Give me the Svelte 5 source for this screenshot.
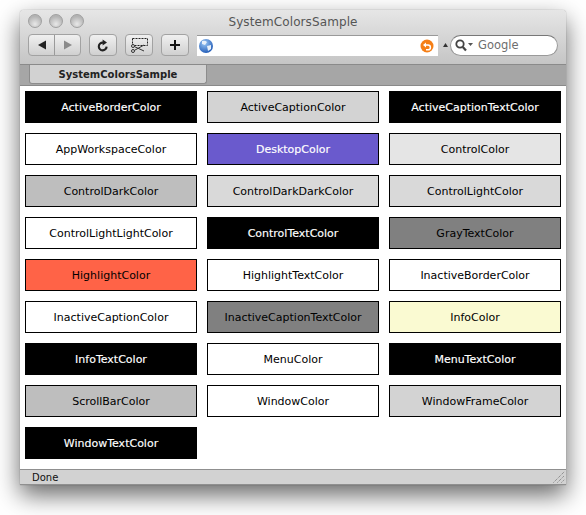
<script>
  const colors = [
    ['ActiveBorderColor', '#000', '#fff'],
    ['ActiveCaptionColor', '#d3d3d3', '#000'],
    ['ActiveCaptionTextColor', '#000', '#fff'],
    ['AppWorkspaceColor', '#fff', '#000'],
    ['DesktopColor', '#6a5acd', '#fff'],
    ['ControlColor', '#e5e5e5', '#000'],
    ['ControlDarkColor', '#bebebe', '#000'],
    ['ControlDarkDarkColor', '#d9d9d9', '#000'],
    ['ControlLightColor', '#d9d9d9', '#000'],
    ['ControlLightLightColor', '#fff', '#000'],
    ['ControlTextColor', '#000', '#fff'],
    ['GrayTextColor', '#808080', '#000'],
    ['HighlightColor', '#ff6347', '#000'],
    ['HighlightTextColor', '#fff', '#000'],
    ['InactiveBorderColor', '#fff', '#000'],
    ['InactiveCaptionColor', '#fff', '#000'],
    ['InactiveCaptionTextColor', '#808080', '#000'],
    ['InfoColor', '#fafad2', '#000'],
    ['InfoTextColor', '#000', '#fff'],
    ['MenuColor', '#fff', '#000'],
    ['MenuTextColor', '#000', '#fff'],
    ['ScrollBarColor', '#bebebe', '#000'],
    ['WindowColor', '#fff', '#000'],
    ['WindowFrameColor', '#d3d3d3', '#000'],
    ['WindowTextColor', '#000', '#fff']
  ];
</script>

<div class="page">
  <div class="window">
    <div class="chrome">
      <div class="titlebar">
        <div class="lights">
          <span class="light"></span>
          <span class="light"></span>
          <span class="light"></span>
        </div>
        <div class="title">SystemColorsSample</div>
      </div>
      <div class="toolbar">
        <div class="btn pair">
          <span class="seg">
            <svg width="10" height="10" viewBox="0 0 10 10"><path d="M1 5 L9 0.5 V9.5 Z" fill="#222" /></svg>
          </span>
          <span class="seg last">
            <svg width="10" height="10" viewBox="0 0 10 10"><path d="M9 5 L1 0.5 V9.5 Z" fill="#8a8a8a" /></svg>
          </span>
        </div>
        <div class="btn">
          <svg width="12" height="13" viewBox="0 0 12 13">
            <path d="M9.6 7.6 A3.9 3.9 0 1 1 6 3.6" fill="none" stroke="#222" stroke-width="2.1" />
            <path d="M5.6 0.4 L10 3.6 L5.6 6.6 Z" fill="#222" />
          </svg>
        </div>
        <div class="btn">
          <svg width="17" height="15" viewBox="0 0 17 15">
            <rect x="1.5" y="0.5" width="15" height="7" fill="none" stroke="#222" stroke-dasharray="2 1" />
            <circle cx="2" cy="8" r="1.5" fill="#ddd" stroke="#333" />
            <circle cx="2" cy="13" r="1.5" fill="#ddd" stroke="#333" />
            <path d="M3.4 8.6 L13 13 M3.4 12.4 L13 7" stroke="#333" stroke-width="1" fill="none" />
          </svg>
        </div>
        <div class="btn">
          <svg width="12" height="12" viewBox="0 0 12 12"><path d="M6 1 V11 M1 6 H11" stroke="#111" stroke-width="2" fill="none" /></svg>
        </div>
        <div class="address">
          <svg width="16" height="16" viewBox="0 0 16 16">
            <defs>
              <radialGradient id="globe" cx="0.4" cy="0.3" r="0.8">
                <stop offset="0" stop-color="#9cc8f5" />
                <stop offset="1" stop-color="#1550b0" />
              </radialGradient>
            </defs>
            <circle cx="8" cy="8" r="7" fill="url(#globe)" />
            <path d="M4 3 Q7 2 9 4 L7 7 L4 6 Z M9 8 L13 7 L13 11 L10 13 Z" fill="#e8f0fa" />
          </svg>
          <svg width="14" height="14" viewBox="0 0 14 14">
            <circle cx="7" cy="7" r="6.5" fill="#f57f17" />
            <path d="M6 3.6 L3 6 L6 8.4 Z" fill="#fff" />
            <path d="M5.5 6 H8 A2.4 2.4 0 0 1 8 10.8 H6" fill="none" stroke="#fff" stroke-width="1.5" />
          </svg>
        </div>
        <svg class="caret" width="5" height="4" viewBox="0 0 5 4"><path d="M2.5 0 L5 4 H0 Z" fill="#333" /></svg>
        <div class="search">
          <svg width="19" height="13" viewBox="0 0 19 13">
            <circle cx="5" cy="5" r="3.7" fill="none" stroke="#444" stroke-width="1.8" />
            <path d="M7.8 8 L11 11.6" stroke="#444" stroke-width="2.2" />
            <path d="M13 4 H18 L15.5 7 Z" fill="#555" />
          </svg>
          <span>Google</span>
        </div>
      </div>
    </div>

    <div class="tabstrip">
      <div class="tab">SystemColorsSample</div>
    </div>

    <div class="content">
      {#each colors as [name, bg, fg]}
        <div class="swatch" class:inverted={fg === '#fff'} style="background: {bg}; color: {fg}">{name}</div>
      {/each}
    </div>

    <div class="statusbar">
      <span>Done</span>
      <svg class="grip" width="12" height="12" viewBox="0 0 12 12">
        <path d="M0.5 11.5 L11.5 0.5 M4.5 11.5 L11.5 4.5 M8.5 11.5 L11.5 8.5" stroke="#777" stroke-dasharray="1 1" fill="none" />
      </svg>
    </div>
  </div>
</div>

<style>
  :global(body) {
    margin: 0;
    background: #fff;
  }

  .page {
    height: 515px;
    padding: 10px 0 0 20px;
    box-sizing: border-box;
    overflow: hidden;
  }

  .window {
    width: 546px;
    height: 475px;
    display: flex;
    flex-direction: column;
    border-radius: 4px 4px 0 0;
    box-shadow: 0 10px 24px rgba(0, 0, 0, 0.6), 0 0 1px rgba(0, 0, 0, 0.5);
    font-family: "DejaVu Sans", sans-serif;
  }

  .chrome {
    height: 55px;
    flex: none;
    background: linear-gradient(#e6e6e6, #c5c5c5);
    border-radius: 4px 4px 0 0;
    border-bottom: 1px solid #8a8a8a;
    box-sizing: border-box;
  }

  .titlebar {
    position: relative;
    height: 24px;
    padding-bottom: 1px;
    box-sizing: border-box;
    display: flex;
    align-items: center;
    justify-content: center;
  }

  .lights {
    position: absolute;
    left: 8px;
    top: 4px;
    display: flex;
    gap: 7px;
  }

  .light {
    width: 14px;
    height: 14px;
    border-radius: 50%;
    border: 1px solid #a0a0a0;
    box-sizing: border-box;
    background: radial-gradient(circle at 50% 75%, #e8e8e8, #b4b4b4 70%);
  }

  .title {
    font-size: 12px;
    letter-spacing: 0.1px;
    color: #555;
  }

  .toolbar {
    display: flex;
    align-items: center;
    height: 22px;
    padding-left: 8px;
  }

  .btn {
    width: 28px;
    height: 22px;
    margin-right: 8px;
    display: flex;
    align-items: center;
    justify-content: center;
    box-sizing: border-box;
    border: 1px solid #a2a2a2;
    border-radius: 4px;
    background: linear-gradient(#f0f0f0, #d0d0d0);
  }

  .pair {
    width: 53px;
  }

  .seg {
    flex: 1;
    height: 100%;
    display: flex;
    align-items: center;
    justify-content: center;
    border-right: 1px solid #9a9a9a;
  }

  .seg.last {
    border-right: none;
  }

  .address {
    width: 241px;
    height: 21px;
    display: flex;
    align-items: center;
    justify-content: space-between;
    padding: 0 4px 0 1px;
    box-sizing: border-box;
    background: #fff;
    border-top: 1px solid #999;
  }

  .caret {
    margin: 0 2px 0 5px;
  }

  .search {
    width: 108px;
    height: 21px;
    display: flex;
    align-items: center;
    gap: 4px;
    padding-left: 4px;
    box-sizing: border-box;
    background: #fff;
    border: 1px solid #9a9a9a;
    border-top-color: #777;
    border-radius: 11px;
    font-size: 11.5px;
    color: #6e6e6e;
  }

  .tabstrip {
    height: 21px;
    flex: none;
    box-sizing: border-box;
    background: #a6a6a6;
    border-bottom: 1px solid #8a8a8a;
    padding-left: 9px;
  }

  .tab {
    width: 178px;
    height: 19px;
    box-sizing: border-box;
    background: #d2d2d2;
    border: 1px solid #8c8c8c;
    border-top: none;
    border-radius: 0 0 3px 3px;
    font-size: 10px;
    font-weight: bold;
    line-height: 20px;
    text-align: center;
    color: #222;
  }

  .content {
    flex: 1;
    background: #fff;
    padding: 5px;
    display: grid;
    grid-template-columns: repeat(3, 172px);
    grid-auto-rows: 32px;
    gap: 10px;
    align-content: start;
  }

  .swatch {
    display: flex;
    align-items: center;
    justify-content: center;
    box-sizing: border-box;
    border: 1px solid #000;
    font-size: 11px;
  }

  .inverted {
    -webkit-text-stroke: 0.15px #fff;
  }

  .statusbar {
    position: relative;
    height: 16px;
    flex: none;
    box-sizing: border-box;
    background: #d2d2d2;
    border-top: 1px solid #8f8f8f;
    border-bottom: 1px solid #8f8f8f;
    padding-left: 12px;
    font-size: 10px;
    line-height: 15px;
    color: #111;
  }

  .grip {
    position: absolute;
    right: 1px;
    bottom: 1px;
  }
</style>
